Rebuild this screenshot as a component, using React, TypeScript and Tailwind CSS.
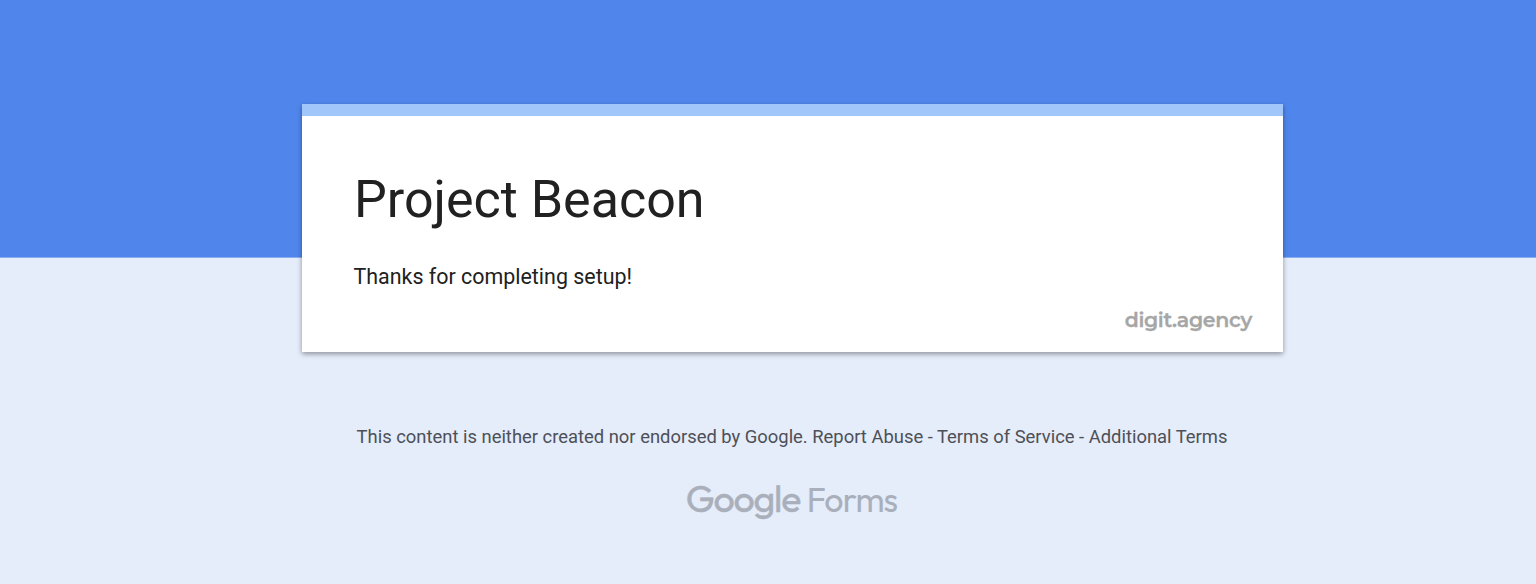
export default function App() {
  return (
    <div className="flex h-[584px] w-full flex-col items-center bg-[linear-gradient(#5086ec_257px,#8aaef2_257px,#8aaef2_258px,#e5ecfa_258px)] pl-[49px] pt-[104px] font-['Roboto',sans-serif]">
      <main className="flex h-[248px] w-[981px] flex-col border-t-[12px] border-[#a0c6fa] bg-white px-[52px] shadow-[0_2px_5px_rgba(0,0,0,0.38)]">
        <h1 className="mt-[49px] text-[52px] leading-[70px] text-[#212121]">Project Beacon</h1>
        <p className="-ml-[0.5px] mt-[26px] text-[21.43px] leading-[32px] text-[#212121]">Thanks for completing setup!</p>
        <div className="-mr-[21px] mt-[11px] self-end font-['Montserrat','Inter',sans-serif] text-[20.5px] font-semibold leading-[32px] tracking-[-0.35px] text-[#a6a6a6] [-webkit-text-stroke:0.3px_#a6a6a6]">digit.agency</div>
      </main>
      <footer className="mt-[71px] flex flex-col items-center">
        <p className="-ml-px whitespace-nowrap text-[18.4px] leading-[28px] text-[#4d5057]">This content is neither created nor endorsed by Google. Report Abuse - Terms of Service - Additional Terms</p>
        <div className="-ml-[2px] mt-[27px] flex items-baseline gap-[6.5px] font-['Outfit','Poppins','Montserrat',sans-serif] leading-[40px] text-[#a9b0bb]"><span className="text-[37.5px] tracking-[-1.2px] [-webkit-text-stroke:0.4px_#a9b0bb]">Google</span><span className="text-[34px] tracking-[-0.9px]">Forms</span></div>
      </footer>
    </div>
  );
}
